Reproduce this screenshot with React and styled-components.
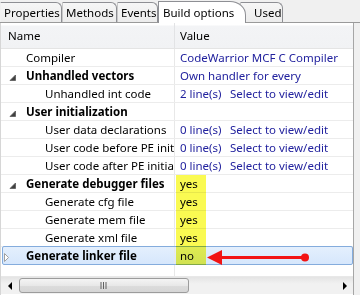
import styled, { createGlobalStyle } from 'styled-components';

const GlobalStyle = createGlobalStyle`
  html, body {
    margin: 0;
    padding: 0;
    background: #f0f0f0;
  }
  body {
    font-family: "Noto Sans", "Open Sans", sans-serif;
    font-size: 11.5px;
    color: #000;
  }
`;

const tabs = [
  { label: 'Properties', width: 62 },
  { label: 'Methods', width: 55 },
  { label: 'Events', width: 41 },
  { label: 'Build options', width: 88, active: true },
  { label: 'Used', width: 37 },
];

const rows = [
  { name: 'Compiler', level: 0, value: 'CodeWarrior MCF C Compiler' },
  { name: 'Unhandled vectors', group: true, value: 'Own handler for every' },
  { name: 'Unhandled int code', level: 1, lines: '2 line(s)' },
  { name: 'User initialization', group: true },
  { name: 'User data declarations', level: 1, lines: '0 line(s)' },
  { name: 'User code before PE initialization', level: 1, lines: '0 line(s)' },
  { name: 'User code after PE initialization', level: 1, lines: '0 line(s)' },
  { name: 'Generate debugger files', group: true, plain: 'yes' },
  { name: 'Generate cfg file', level: 1, plain: 'yes' },
  { name: 'Generate mem file', level: 1, plain: 'yes' },
  { name: 'Generate xml file', level: 1, plain: 'yes' },
  { name: 'Generate linker file', group: true, collapsed: true, plain: 'no', selected: true },
];

export default function App() {
  return (
    <Window>
      <GlobalStyle />
      <TabStrip>
        {tabs.map((t) => (
          <Tab key={t.label} $width={t.width} $active={t.active}>
            {t.label}
          </Tab>
        ))}
      </TabStrip>
      <Panel>
        <Table>
          <HeaderRow>
            <HeaderCell>Name</HeaderCell>
            <HeaderCell $last>Value</HeaderCell>
          </HeaderRow>
          {rows.map((r) => (
            <Row key={r.name} $selected={r.selected}>
              <NameCell $group={r.group} $level={r.group ? 0 : r.level}>
                {r.group && <Twisty collapsed={r.collapsed} />}
                <Label>{r.name}</Label>
              </NameCell>
              <ValueCell>
                {r.value && <Link>{r.value}</Link>}
                {r.lines && (
                  <Link>
                    <Count>{r.lines}</Count>Select to view/edit
                  </Link>
                )}
                {r.plain && <span>{r.plain}</span>}
              </ValueCell>
            </Row>
          ))}
          <Filler>
            <FillerName />
          </Filler>
          <Scrollbar />
        </Table>
        <Gutter />
      </Panel>
      <Highlight />
      <Arrow />
    </Window>
  );
}

function Twisty({ collapsed }) {
  return (
    <TwistyBox width="24" height="17" viewBox="0 0 24 17">
      {collapsed ? (
        <path d="M2.5 6.5 L6.5 10.5 L2.5 14.5 Z" fill="#fff" stroke="#a0a0a0" strokeWidth="1" />
      ) : (
        <path d="M13.5 8 L13.5 13.5 L8 13.5 Z" fill="#404040" stroke="#595959" strokeWidth="0.8" />
      )}
    </TwistyBox>
  );
}

function Scrollbar() {
  return (
    <ScrollTrack>
      <ScrollButton>
        <svg width="5" height="8" viewBox="0 0 5 8">
          <path d="M4 0 L0 4 L4 8 Z" fill="#000" />
        </svg>
      </ScrollButton>
      <Thumb>
        <svg width="8" height="7" viewBox="0 0 8 7">
          <path d="M1 0 V7 M3.5 0 V7 M6 0 V7" stroke="#606060" strokeWidth="1" />
        </svg>
      </Thumb>
      <TrackSpace />
      <ScrollButton>
        <svg width="5" height="8" viewBox="0 0 5 8">
          <path d="M1 0 L5 4 L1 8 Z" fill="#000" />
        </svg>
      </ScrollButton>
    </ScrollTrack>
  );
}

function Arrow() {
  return (
    <ArrowLayer width="360" height="295" viewBox="0 0 360 295">
      <defs>
        <filter id="blur" x="-10%" y="-200%" width="120%" height="500%">
          <feGaussianBlur stdDeviation="2" />
        </filter>
      </defs>
      <path d="M214 252 H309" stroke="#7a7a7a" strokeWidth="5" opacity="0.75" filter="url(#blur)" strokeLinecap="round" />
      <path d="M218 257.5 H305" stroke="#f21414" strokeWidth="3" />
      <path d="M207 257.5 L222 250 L222 265 Z" fill="#f21414" />
      <circle cx="305" cy="257.5" r="4" fill="#f21414" />
    </ArrowLayer>
  );
}

const Window = styled.div`
  position: relative;
  width: 360px;
  height: 295px;
  display: flex;
  flex-direction: column;
  overflow: hidden;
`;

const TabStrip = styled.div`
  display: flex;
  align-items: flex-end;
  height: 22px;
  border-bottom: 1px solid #9a9a9a;
  padding-left: 0;
`;

const Tab = styled.div`
  box-sizing: border-box;
  width: ${(p) => p.$width}px;
  height: ${(p) => (p.$active ? 22 : 20)}px;
  margin-bottom: ${(p) => (p.$active ? -1 : 0)}px;
  padding-left: ${(p) => (p.$active ? 4 : 3)}px;
  padding-top: ${(p) => (p.$active ? 3 : 2)}px;
  border: 1px solid #8e8f94;
  border-bottom: none;
  border-left-color: ${(p) => (p.$active ? '#8e8f94' : '#c8c8c8')};
  border-top-right-radius: ${(p) => (p.$active ? '16px 14px' : '6px')};
  background: ${(p) => (p.$active ? '#ffffff' : 'linear-gradient(#f6f6f6, #ececec)')};
  white-space: nowrap;
  line-height: 15px;
  position: relative;
  z-index: ${(p) => (p.$active ? 2 : 1)};
  &:first-child {
    border-left-color: #f0f0f0;
  }
  &:last-child {
    margin-left: -6px;
    padding-left: 13px;
    width: ${(p) => p.$width + 6}px;
  }
`;

const Panel = styled.div`
  flex: 1;
  display: flex;
  min-height: 0;
`;

const Table = styled.div`
  width: 353px;
  display: flex;
  flex-direction: column;
  background: #fff;
  border-right: 1px solid #a6a6a6;
  border-left: 1px solid #d6d6d6;
  box-sizing: border-box;
  width: 354px;
`;

const Gutter = styled.div`
  flex: 1;
  background: #f0f0f0;
`;

const HeaderRow = styled.div`
  display: grid;
  grid-template-columns: 174px 1fr;
  height: 25px;
  border-bottom: 1px solid #e4e4e4;
  background: linear-gradient(#ffffff 0, #ffffff 2px, #f3f4f6 3px, #f1f2f4 100%);
`;

const HeaderCell = styled.div`
  display: flex;
  align-items: center;
  padding-left: ${(p) => (p.$last ? 5 : 7)}px;
  border-right: ${(p) => (p.$last ? 'none' : '1px solid #e2e3e5')};
  margin-right: ${(p) => (p.$last ? 1 : 0)}px;
`;

const Row = styled.div`
  display: grid;
  grid-template-columns: 174px 1fr;
  height: 17px;
  border-bottom: 1px solid #ececec;
  position: relative;
  ${(p) =>
    p.$selected &&
    `
    border-bottom-color: transparent;
    &::before {
      content: '';
      position: absolute;
      left: 1px;
      right: 0;
      top: -1px;
      bottom: -1px;
      border: 1px solid #84acdd;
      border-radius: 2px;
      background: linear-gradient(#e4effd, #d6e7fc);
    }
  `}
`;

const NameCell = styled.div`
  position: relative;
  display: flex;
  align-items: center;
  overflow: hidden;
  white-space: nowrap;
  padding-left: ${(p) => (p.$group ? 1 : p.$level === 0 ? 25 : 44)}px;
  font-weight: ${(p) => (p.$group ? 700 : 400)};
  border-right: 1px solid #e8e8e8;
`;

const TwistyBox = styled.svg`
  flex: none;
  display: block;
`;

const Label = styled.span`
  line-height: 17px;
`;

const ValueCell = styled.div`
  position: relative;
  display: flex;
  align-items: center;
  white-space: nowrap;
  overflow: hidden;
  padding-left: 5px;
`;

const Link = styled.span`
  color: #22229e;
`;

const Count = styled.span`
  display: inline-block;
  width: 50px;
`;

const Filler = styled.div`
  flex: 1;
  display: grid;
  grid-template-columns: 174px 1fr;
`;

const FillerName = styled.div`
  border-right: 1px solid #e8e8e8;
`;

const ScrollTrack = styled.div`
  height: 17px;
  display: flex;
  align-items: stretch;
  background: linear-gradient(#e4e4e4, #f1f1f1 40%, #f1f1f1);
  border-top: 1px solid #e8e8e8;
  margin-bottom: 1px;
`;

const ScrollButton = styled.div`
  width: 18px;
  display: flex;
  align-items: center;
  justify-content: center;
`;

const Thumb = styled.div`
  width: 170px;
  margin: 1px 0;
  border: 1px solid #9c9c9c;
  border-radius: 3px;
  box-sizing: border-box;
  background: linear-gradient(#f4f4f4, #e8e8e8 50%, #dcdcdc 51%, #d6d6d6);
  display: flex;
  align-items: center;
  justify-content: center;
`;

const TrackSpace = styled.div`
  flex: 1;
`;

const Highlight = styled.div`
  position: absolute;
  left: 176px;
  top: 175px;
  width: 30px;
  height: 90px;
  background: #fafa52;
  mix-blend-mode: multiply;
  pointer-events: none;
`;

const ArrowLayer = styled.svg`
  position: absolute;
  left: 0;
  top: 0;
  pointer-events: none;
`;
